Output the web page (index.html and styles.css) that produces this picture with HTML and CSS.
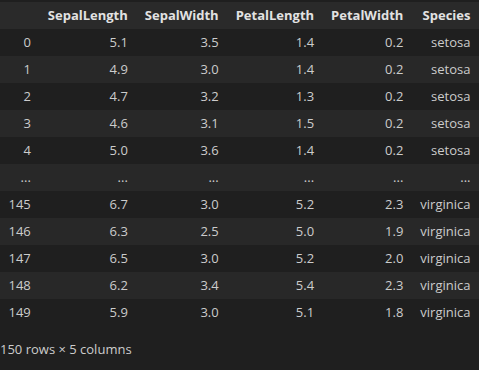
FILE: index.html
```html
<!DOCTYPE html>
<html>
<head>
<meta charset="utf-8">
<link rel="stylesheet" href="styles.css">
</head>
<body>
<div class="output">
<table class="dataframe">
<thead>
<tr><th></th><th>SepalLength</th><th>SepalWidth</th><th>PetalLength</th><th>PetalWidth</th><th>Species</th></tr>
</thead>
<tbody>
<tr><th>0</th><td>5.1</td><td>3.5</td><td>1.4</td><td>0.2</td><td>setosa</td></tr>
<tr><th>1</th><td>4.9</td><td>3.0</td><td>1.4</td><td>0.2</td><td>setosa</td></tr>
<tr><th>2</th><td>4.7</td><td>3.2</td><td>1.3</td><td>0.2</td><td>setosa</td></tr>
<tr><th>3</th><td>4.6</td><td>3.1</td><td>1.5</td><td>0.2</td><td>setosa</td></tr>
<tr><th>4</th><td>5.0</td><td>3.6</td><td>1.4</td><td>0.2</td><td>setosa</td></tr>
<tr><th>...</th><td>...</td><td>...</td><td>...</td><td>...</td><td>...</td></tr>
<tr><th>145</th><td>6.7</td><td>3.0</td><td>5.2</td><td>2.3</td><td>virginica</td></tr>
<tr><th>146</th><td>6.3</td><td>2.5</td><td>5.0</td><td>1.9</td><td>virginica</td></tr>
<tr><th>147</th><td>6.5</td><td>3.0</td><td>5.2</td><td>2.0</td><td>virginica</td></tr>
<tr><th>148</th><td>6.2</td><td>3.4</td><td>5.4</td><td>2.3</td><td>virginica</td></tr>
<tr><th>149</th><td>5.9</td><td>3.0</td><td>5.1</td><td>1.8</td><td>virginica</td></tr>
</tbody>
</table>
<p class="shape">150 rows × 5 columns</p>
</div>
</body>
</html>
```
FILE: styles.css
```css
html, body {
  margin: 0;
  background: #1f1f1f;
}
body {
  padding-top: 2px;
  font-family: "Open Sans", "Noto Sans", sans-serif;
  font-size: 13px;
  color: #cccccc;
}
.dataframe {
  border-collapse: collapse;
  border-spacing: 0;
}
.dataframe th,
.dataframe td {
  height: 27px;
  padding: 0 8.5px;
  text-align: right;
  white-space: nowrap;
  font-weight: normal;
  line-height: 27px;
}
.dataframe thead th {
  font-weight: bold;
  color: #e2e2e2;
}
.dataframe thead tr {
  background: #2a2a2a;
}
.dataframe tbody tr:nth-child(even) {
  background: #282828;
}
.shape {
  margin: 14px 0 0 0;
  line-height: 18px;
}
```
